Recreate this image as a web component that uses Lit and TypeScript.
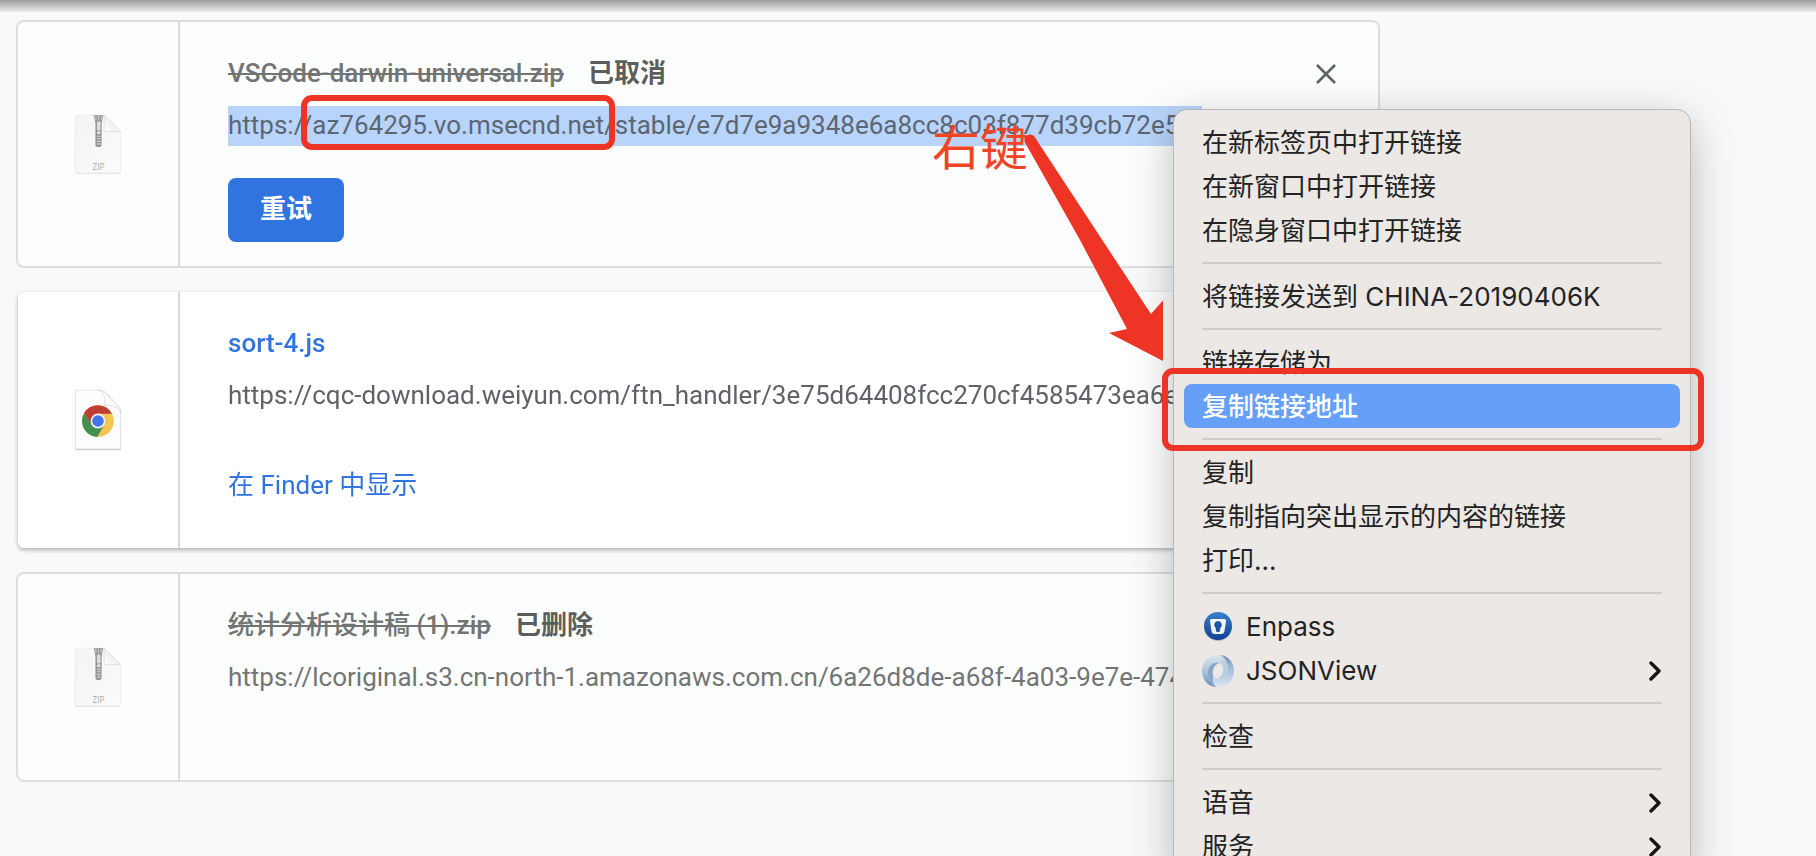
import { LitElement, html, css, svg, nothing } from "lit";
import { customElement, property } from "lit/decorators.js";

type FileKind = "zip" | "js";

interface Download {
  kind: FileKind;
  name: string;
  status?: string;
  url: string;
  selected?: boolean;
  action?: "retry" | "show";
}

interface MenuEntry {
  label: string;
  icon?: "enpass" | "jsonview";
  submenu?: boolean;
  active?: boolean;
}

const DOWNLOADS: Download[] = [
  {
    kind: "zip",
    name: "VSCode-darwin-universal.zip",
    status: "已取消",
    url: "https://az764295.vo.msecnd.net/stable/e7d7e9a9348e6a8cc8c03f877d39cb72e5dfb1ff",
    selected: true,
    action: "retry",
  },
  {
    kind: "js",
    name: "sort-4.js",
    url: "https://cqc-download.weiyun.com/ftn_handler/3e75d64408fcc270cf4585473ea6e0",
    action: "show",
  },
  {
    kind: "zip",
    name: "统计分析设计稿 (1).zip",
    status: "已删除",
    url: "https://lcoriginal.s3.cn-north-1.amazonaws.com.cn/6a26d8de-a68f-4a03-9e7e-4740",
  },
];

const MENU: MenuEntry[][] = [
  [
    { label: "在新标签页中打开链接" },
    { label: "在新窗口中打开链接" },
    { label: "在隐身窗口中打开链接" },
  ],
  [{ label: "将链接发送到 CHINA-20190406K" }],
  [{ label: "链接存储为…" }, { label: "复制链接地址", active: true }],
  [
    { label: "复制" },
    { label: "复制指向突出显示的内容的链接" },
    { label: "打印..." },
  ],
  [
    { label: "Enpass", icon: "enpass" },
    { label: "JSONView", icon: "jsonview", submenu: true },
  ],
  [{ label: "检查" }],
  [
    { label: "语音", submenu: true },
    { label: "服务", submenu: true },
  ],
];

@customElement("file-icon")
export class FileIcon extends LitElement {
  @property() kind: FileKind = "zip";

  static styles = css`
    :host {
      display: block;
    }
    .icon {
      display: block;
      width: 64px;
      height: 64px;
    }
    .label {
      font: 8px "Open Sans", sans-serif;
      fill: #a6a8a8;
    }
  `;

  private zip() {
    return svg`
      <defs>
        <linearGradient id="page" x1="0" y1="0" x2="1" y2="1">
          <stop offset="0" stop-color="#f4f4f4" />
          <stop offset="1" stop-color="#fbfbfb" />
        </linearGradient>
        <linearGradient id="fold" x1="0" y1="1" x2="0.6" y2="0.4">
          <stop offset="0" stop-color="#ffffff" />
          <stop offset="1" stop-color="#ececec" />
        </linearGradient>
      </defs>
      <path d="M11 5h25l17 17v36a2 2 0 0 1-2 2H11a2 2 0 0 1-2-2V5z" fill="#d9dada" opacity=".8" />
      <path d="M11 3h26l16 16v37a3 3 0 0 1-3 3H12a3 3 0 0 1-3-3V5a2 2 0 0 1 2-2z" fill="url(#page)" stroke="#ececec" stroke-width=".6" />
      <path d="M37 3l16 16H39a2 2 0 0 1-2-2z" fill="url(#fold)" stroke="#dedede" stroke-width=".8" />
      <path d="M27 3h9l-1.500 8v20a2.500 2.500 0 0 1-2.500 3h-1a2.500 2.500 0 0 1-2.500-3V11z" fill="#969696" />
      <path d="M29 3v5M31.500 3v5M34 3v5" stroke="#d8d8d8" stroke-width=".8" />
      <rect x="30" y="9" width="3.400" height="9" rx="1.500" fill="#dedede" />
      <circle cx="31.700" cy="20" r="1.600" fill="#e6e6e6" />
      <path d="M30 23.500h3.500M30 26h3.500M30 28.500h3.500M30 31h3.500" stroke="#dcdcdc" stroke-width="1" />
      <text class="label" x="31.500" y="56" text-anchor="middle">ZIP</text>
    `;
  }

  private js() {
    return svg`
      <defs>
        <linearGradient id="curl" x1="0" y1="1" x2="1" y2="0">
          <stop offset="0" stop-color="#e6e6e6" />
          <stop offset=".5" stop-color="#ffffff" />
          <stop offset="1" stop-color="#c8c8c8" />
        </linearGradient>
      </defs>
      <path d="M9 2h22c5 0 7 2 10 5l8 9c3 3 4 5 4 9v35H9z" fill="#fdfdfd" stroke="#dcdcdc" stroke-width=".8" />
      <path d="M9 59.500h44" stroke="#cfcfcf" stroke-width="1.200" />
      <path d="M31 2c6 1 7 8 6.500 15 7-1 14 2 15.500 8 0-5-2-7-4-9l-8-9c-3-3-5-5-10-5z" fill="url(#curl)" stroke="#c9c9c9" stroke-width=".5" />
      <circle cx="31" cy="32" r="15.300" fill="#f5c451" />
      <path d="M24.900 35.500L17.580 24.250a15.500 15.500 0 0 0 12.600 23.200l7-11.900z" fill="#42904f" />
      <path d="M17.580 24.250A15.500 15.500 0 0 1 44.500 25H31l-6.100 10.500z" fill="#c03d33" />
      <circle cx="31" cy="32" r="7.200" fill="#eef1f5" />
      <circle cx="31" cy="32" r="5.600" fill="#4374e8" />
    `;
  }

  render() {
    return html`<svg class="icon" viewBox="0 0 62 62" aria-hidden="true">
      ${this.kind === "zip" ? this.zip() : this.js()}
    </svg>`;
  }
}

@customElement("download-card")
export class DownloadCard extends LitElement {
  @property({ attribute: false }) item!: Download;

  static styles = css`
    :host {
      display: block;
      font: 26px/38px Roboto, "Noto Sans CJK SC", sans-serif;
    }
    .card {
      display: flex;
      box-sizing: border-box;
      min-height: 210px;
      border: 2px solid #dcdfde;
      border-radius: 8px;
      background: #fcfefd;
      color: #737574;
    }
    .card.done {
      border-color: transparent;
      background: #fff padding-box;
      color: #5f6368;
      filter: drop-shadow(0 2px 2px rgba(60, 64, 67, 0.4));
    }
    .thumb {
      display: flex;
      flex: none;
      align-items: center;
      justify-content: center;
      box-sizing: border-box;
      width: 162px;
      border-right: 2px solid #d8dada;
    }
    .body {
      flex: 1;
      min-width: 0;
      padding: 32px 48px 24px;
    }
    .title {
      display: flex;
      gap: 24px;
      font-weight: 500;
    }
    .name {
      color: inherit;
      text-decoration: line-through;
    }
    .done .name {
      color: #3174e0;
      text-decoration: none;
    }
    .status {
      color: #5c5e5d;
      font-weight: 700;
    }
    .url {
      display: block;
      max-width: 974px;
      margin-top: 14px;
      padding-bottom: 2px;
      overflow: hidden;
      color: inherit;
      text-decoration: none;
      text-overflow: ellipsis;
      white-space: nowrap;
    }
    .url.selected {
      background: #b9d4fa;
      color: #5b6674;
    }
    .retry {
      display: block;
      margin-top: 32px;
      padding: 12px 32px 14px;
      border: 0;
      border-radius: 8px;
      background: #3174e0;
      color: #fff;
      font: inherit;
      font-weight: 700;
    }
    .show {
      display: block;
      width: fit-content;
      margin: 50px 0 20px;
      color: #3174e0;
      text-decoration: none;
    }
    .close {
      flex: none;
      align-self: flex-start;
      margin: 36px 36px 0 0;
      padding: 4px;
      border: 0;
      background: none;
    }
    .cross {
      display: block;
      width: 24px;
      height: 24px;
      fill: none;
      stroke: #5f6368;
      stroke-width: 2.6;
    }
  `;

  render() {
    const d = this.item;
    return html`
      <article class="card ${d.status ? "" : "done"}">
        <div class="thumb"><file-icon .kind=${d.kind}></file-icon></div>
        <div class="body">
          <div class="title">
            ${d.status
              ? html`<span class="name">${d.name}</span><span class="status">${d.status}</span>`
              : html`<a class="name" href="#">${d.name}</a>`}
          </div>
          <a class="url ${d.selected ? "selected" : ""}" href="#">${d.url}</a>
          ${d.action === "retry" ? html`<button class="retry">重试</button>` : nothing}
          ${d.action === "show" ? html`<a class="show" href="#">在 Finder 中显示</a>` : nothing}
        </div>
        <button class="close" aria-label="移除">
          <svg class="cross" viewBox="0 0 24 24"><path d="M3 3l18 18M21 3L3 21" /></svg>
        </button>
      </article>
    `;
  }
}

@customElement("context-menu")
export class ContextMenu extends LitElement {
  static styles = css`
    :host {
      display: block;
      box-sizing: border-box;
      width: 518px;
      padding: 10px;
      border: 1px solid #b9b8b7;
      border-radius: 14px;
      background: #ece8e5;
      box-shadow: 0 12px 44px rgba(0, 0, 0, 0.26);
      font: 26px/42px Inter, "Noto Sans CJK SC", sans-serif;
    }
    .group + .group::before {
      content: "";
      display: block;
      height: 2px;
      margin: 10px 18px;
      background: #d0ccc9;
    }
    .item {
      display: flex;
      align-items: center;
      box-sizing: border-box;
      width: 100%;
      height: 44px;
      padding: 2px 18px 0;
      border: 0;
      border-radius: 8px;
      background: none;
      color: #232323;
      font: inherit;
      text-align: left;
      white-space: nowrap;
    }
    .item.active {
      background: #659ff8;
      color: #fff;
      font-weight: 500;
    }
    .label {
      flex: 1;
    }
    .icon {
      width: 32px;
      height: 32px;
      margin-right: 12px;
    }
    .chevron {
      width: 14px;
      height: 20px;
      fill: none;
      stroke: #161616;
      stroke-width: 3.4;
      stroke-linecap: round;
      stroke-linejoin: round;
    }
  `;

  private icon(kind: MenuEntry["icon"]) {
    if (kind === "enpass") {
      return html`<svg class="icon" viewBox="0 0 32 32" aria-hidden="true">
        <defs>
          <linearGradient id="ep" x1="0" y1="0" x2="0" y2="1">
            <stop offset="0" stop-color="#3a80cc" />
            <stop offset="1" stop-color="#123f92" />
          </linearGradient>
        </defs>
        <circle cx="16" cy="16" r="14" fill="#8f9aac" opacity=".6" />
        <circle cx="16" cy="15" r="14" fill="url(#ep)" />
        <path d="M10 8h12a2 2 0 0 1 2 2.300l-1.500 9.700a3.500 3.500 0 0 1-3.500 3h-6a3.500 3.500 0 0 1-3.500-3L8 10.300a2 2 0 0 1 2-2.300z" fill="#f2f4f9" />
        <path d="M16 10a4 4 0 0 0-2.200 7.200V19a2.200 2.200 0 0 0 4.400 0v-1.800A4 4 0 0 0 16 10z" fill="#1c55a8" />
      </svg>`;
    }
    return html`<svg class="icon" viewBox="0 0 32 32" aria-hidden="true">
      <defs>
        <linearGradient id="ja" x1="0" y1="0" x2="0" y2="1">
          <stop offset="0" stop-color="#dce6ef" />
          <stop offset=".6" stop-color="#a3bcd6" />
          <stop offset="1" stop-color="#5f86b2" />
        </linearGradient>
        <linearGradient id="jb" x1="0" y1="0" x2="0" y2="1">
          <stop offset="0" stop-color="#5f86b2" />
          <stop offset=".4" stop-color="#a3bcd6" />
          <stop offset="1" stop-color="#dce6ef" />
        </linearGradient>
      </defs>
      <path d="M18 0C8-1 0 6 0 16c0 8 5 14 12 16-4-4-6-9-6-14 0-6 4-11 11-10 2 1 3 2 4 4 2-5 0-9-3-12z" fill="url(#ja)" />
      <path d="M14 32c10 1 18-6 18-16 0-8-5-14-12-16 4 4 6 9 6 14 0 6-4 11-11 10-2-1-3-2-4-4-2 5 0 9 3 12z" fill="url(#jb)" />
      <path d="M17 8C10 7 6 12 6 18c0 5 2 10 6 14h2c-3-3-4-7-3-12-1-5 1-10 6-12z" fill="#86a5c8" />
      <path d="M15 24c7 1 11-4 11-10 0-5-2-10-6-14h-2c3 3 4 7 3 12 1 5-1 10-6 12z" fill="#b9cde1" />
    </svg>`;
  }

  render() {
    return MENU.map(
      (group) => html`<div class="group" role="group">
        ${group.map(
          (e) => html`<button class="item ${e.active ? "active" : ""}" role="menuitem">
            ${e.icon ? this.icon(e.icon) : nothing}
            <span class="label">${e.label}</span>
            ${e.submenu
              ? html`<svg class="chevron" viewBox="0 0 14 20"><path d="M3 2l8 8-8 8" /></svg>`
              : nothing}
          </button>`
        )}
      </div>`
    );
  }
}

@customElement("app-root")
export class AppRoot extends LitElement {
  static styles = css`
    :host {
      display: block;
      position: relative;
      box-sizing: border-box;
      height: 100vh;
      overflow: hidden;
      background: #f8f9fb;
    }
    .edge {
      height: 12px;
      background: linear-gradient(#9b9b9b, #c3c4c5 50%, #ebecee);
    }
    .list {
      display: flex;
      flex-direction: column;
      gap: 22px;
      max-width: 1364px;
      padding: 8px 16px;
    }
    .menu {
      position: absolute;
      left: 1173px;
      top: 109px;
    }
    .mark {
      position: absolute;
      box-sizing: border-box;
      border: 6px solid #ee3424;
      border-radius: 11px;
      pointer-events: none;
    }
    .mark.host {
      left: 301px;
      top: 95px;
      width: 314px;
      height: 55px;
    }
    .mark.copy {
      left: 1162px;
      top: 368px;
      width: 542px;
      height: 83px;
    }
    .note {
      position: absolute;
      left: 932px;
      top: 117px;
      color: #f04425;
      font: 48px/54px "Noto Sans CJK SC", sans-serif;
    }
    .arrow {
      position: absolute;
      left: 1020px;
      top: 130px;
      width: 150px;
      height: 240px;
      fill: #ee3424;
    }
  `;

  render() {
    return html`
      <div class="edge"></div>
      <main class="list">
        ${DOWNLOADS.map((d) => html`<download-card .item=${d}></download-card>`)}
      </main>
      <context-menu class="menu" role="menu"></context-menu>
      <div class="mark host"></div>
      <div class="mark copy"></div>
      <div class="note">右键</div>
      <svg class="arrow" viewBox="0 0 150 240" aria-hidden="true">
        <path d="M5 12.500A5.500 5.500 0 0 1 15 7.500L100 137l31 47 12-13.500V231L89 203l18-4L60 110z" />
      </svg>
    `;
  }
}
